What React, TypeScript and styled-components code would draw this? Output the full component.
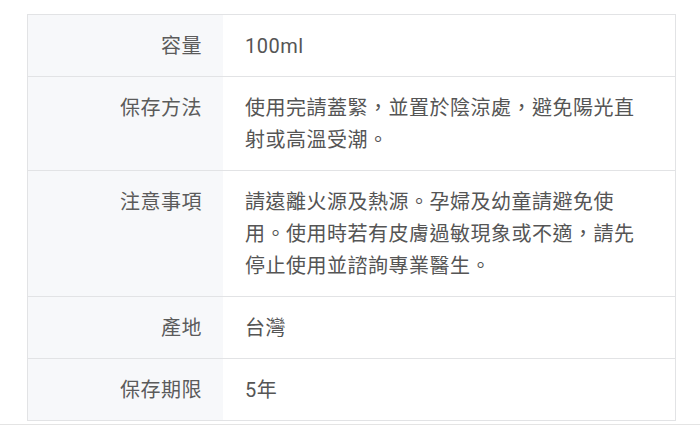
import React from "react";
import styled, { createGlobalStyle } from "styled-components";

const GlobalStyle = createGlobalStyle`
  html, body { margin: 0; padding: 0; background: #ffffff; }
  body { font-family: Roboto, "Noto Sans CJK TC", "Noto Sans CJK SC", sans-serif; }
`;

const Page = styled.div`
  width: 700px;
  height: 425px;
  padding: 14px 0 0 27px;
  box-sizing: border-box;
  overflow: hidden;
`;

const Table = styled.div`
  width: 649px;
  box-sizing: border-box;
  border: 1px solid #e2e3e5;
  border-bottom: none;
  display: flex;
  flex-direction: column;
`;

const Row = styled.div`
  display: grid;
  grid-template-columns: 195px 1fr;
  border-bottom: 1px solid #e2e3e5;
`;

const Label = styled.div`
  background: #f7f8fa;
  color: #5b5b5b;
  font-size: 20px;
  line-height: 32px;
  letter-spacing: 0.5px;
  text-align: right;
  padding: 15px 21px 14px 10px;
`;

const Value = styled.div`
  background: #ffffff;
  color: #555555;
  font-size: 20px;
  line-height: 32px;
  letter-spacing: 0.5px;
  padding: 15px 31px 14px 22px;
  font-feature-settings: "locl" 1;
`;

const Rule = styled.div`
  margin-top: 3px;
  margin-left: -27px;
  width: 700px;
  height: 2px;
  background: #e4e4e4;
`;

const rows: [string, string][] = [
  ["容量", "100ml"],
  ["保存方法", "使用完請蓋緊，並置於陰涼處，避免陽光直射或高溫受潮。"],
  ["注意事項", "請遠離火源及熱源。孕婦及幼童請避免使用。使用時若有皮膚過敏現象或不適，請先停止使用並諮詢專業醫生。"],
  ["產地", "台灣"],
  ["保存期限", "5年"],
];

export default function App() {
  return (
    <>
      <GlobalStyle />
      <Page lang="zh-TW">
        <Table>
          {rows.map(([k, v]) => (
            <Row key={k}>
              <Label>{k}</Label>
              <Value>{v}</Value>
            </Row>
          ))}
        </Table>
        <Rule />
      </Page>
    </>
  );
}
